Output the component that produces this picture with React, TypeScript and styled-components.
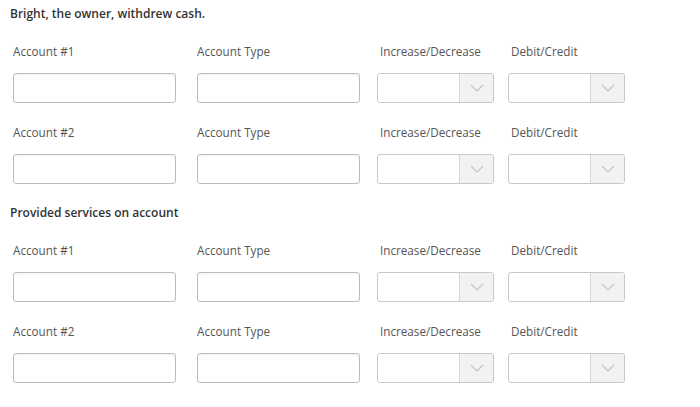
import styled, { createGlobalStyle } from 'styled-components';

const GlobalStyle = createGlobalStyle`
    body {
        margin: 0;
        background: #fff;
        font-family: 'Open Sans', 'Liberation Sans', sans-serif;
    }
`;

const transactions = ['Bright, the owner, withdrew cash.', 'Provided services on account'];
const accounts = ['Account #1', 'Account #2'];

export default function App() {
    return (
        <Page>
            <GlobalStyle />
            {transactions.map((title) => (
                <Section key={title}>
                    <Heading>{title}</Heading>
                    {accounts.map((account) => (
                        <EntryRow key={account}>
                            <Field>
                                <Label>{account}</Label>
                                <TextInput />
                            </Field>
                            <Field>
                                <Label>Account Type</Label>
                                <TextInput />
                            </Field>
                            <Field>
                                <Label indent>Increase/Decrease</Label>
                                <Select />
                            </Field>
                            <Field>
                                <Label indent>Debit/Credit</Label>
                                <Select />
                            </Field>
                        </EntryRow>
                    ))}
                </Section>
            ))}
        </Page>
    );
}

function Select() {
    return (
        <SelectBox>
            <SelectValue />
            <SelectArrow>
                <svg width="14" height="8" viewBox="0 0 14 8">
                    <path d="M1 1l6 6 6-6" fill="none" stroke="#c4c4c4" strokeWidth="1.2" />
                </svg>
            </SelectArrow>
        </SelectBox>
    );
}

const Page = styled.div`
    padding: 4px 0 0 10px;
    display: flex;
    flex-direction: column;
    gap: 19px;
`;

const Section = styled.div`
    display: flex;
    flex-direction: column;
    gap: 19px;
`;

const Heading = styled.div`
    font-size: 12px;
    font-weight: 600;
    line-height: 20px;
    color: #333;
    margin-bottom: -2px;
`;

const EntryRow = styled.div`
    display: grid;
    grid-template-columns: 184px 180px 131px 117px;
    padding-left: 3px;
`;

const Field = styled.div`
    display: flex;
    flex-direction: column;
    gap: 12px;
`;

const Label = styled.div<{ indent?: boolean }>`
    font-size: 11.7px;
    line-height: 20px;
    color: #555;
    padding-left: ${({ indent }) => (indent ? '3px' : '0')};
`;

const TextInput = styled.div`
    width: 163px;
    height: 30px;
    box-sizing: border-box;
    border: 1px solid #bdbdbd;
    border-radius: 3px;
    box-shadow: inset 0 1px 2px rgba(0, 0, 0, 0.06);
`;

const SelectBox = styled.div`
    width: 117px;
    height: 30px;
    box-sizing: border-box;
    border: 1px solid #c8c8c8;
    border-radius: 3px;
    display: flex;
    overflow: hidden;
`;

const SelectValue = styled.div`
    flex: 1;
`;

const SelectArrow = styled.div`
    width: 33px;
    border-left: 1px solid #d6d6d6;
    background: #f2f2f2;
    display: flex;
    align-items: center;
    justify-content: center;
`;
